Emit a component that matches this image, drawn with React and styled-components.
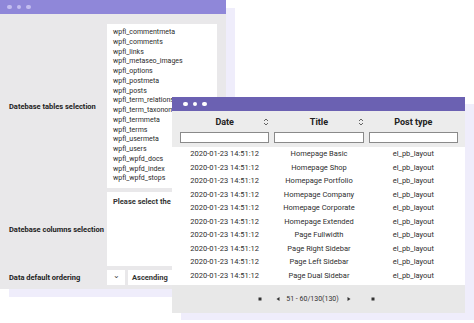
import styled, { createGlobalStyle } from 'styled-components';

const GlobalStyle = createGlobalStyle`
  html, body {
    margin: 0;
    padding: 0;
    background: #ffffff;
  }
  body {
    font-family: Roboto, "Liberation Sans", sans-serif;
    color: #222;
  }
`;

const tables = [
  'wpfl_commentmeta',
  'wpfl_comments',
  'wpfl_links',
  'wpfl_metaseo_images',
  'wpfl_options',
  'wpfl_postmeta',
  'wpfl_posts',
  'wpfl_term_relationships',
  'wpfl_term_taxonomy',
  'wpfl_termmeta',
  'wpfl_terms',
  'wpfl_usermeta',
  'wpfl_users',
  'wpfl_wpfd_docs',
  'wpfl_wpfd_index',
  'wpfl_wpfd_stops',
];

const rows = [
  'Homepage Basic',
  'Homepage Shop',
  'Homepage Portfolio',
  'Homepage Company',
  'Homepage Corporate',
  'Homepage Extended',
  'Page Fullwidth',
  'Page Right Sidebar',
  'Page Left Sidebar',
  'Page Dual Sidebar',
];

function SortIcon() {
  return (
    <svg width="6" height="8" viewBox="0 0 6 8">
      <path d="M1 3 L3 1 L5 3 M1 5 L3 7 L5 5" fill="none" stroke="#555" strokeWidth="0.9" />
    </svg>
  );
}

function PageIcon({ dir, end }) {
  const flip = dir === 'right' ? 'scale(-1,1) translate(-6,0)' : undefined;
  return (
    <svg width="6" height="6" viewBox="0 0 6 6">
      <g transform={flip}>
        {end ? (
          <rect x="1.5" y="1.5" width="3" height="3" fill="#333" />
        ) : (
          <path d="M1.5 3 L4.5 1 L4.5 5 Z" fill="#333" />
        )}
      </g>
    </svg>
  );
}

export default function App() {
  return (
    <>
      <GlobalStyle />
      <Stage>
        <BackWindow>
          <TitleBar $color="#8f87d9">
            <Dot $color="#c3bdf0" />
            <Dot $color="#c3bdf0" />
            <Dot $color="#c3bdf0" />
          </TitleBar>
          <SettingsGrid>
            <Label>Datebase tables selection</Label>
            <ListBox>
              {tables.map((t) => (
                <li key={t}>{t}</li>
              ))}
            </ListBox>
            <Label>Datebase columns selection</Label>
            <ColumnsBox>Please select the table first</ColumnsBox>
            <Label>Data default ordering</Label>
            <OrderRow>
              <SelectBox>⌄</SelectBox>
              <OrderBox>Ascending</OrderBox>
            </OrderRow>
          </SettingsGrid>
        </BackWindow>

        <FrontWindow>
          <TitleBar $color="#6b61b2" $dotsLeft="11px">
            <Dot $color="#ffffff" />
            <Dot $color="#ffffff" />
            <Dot $color="#ffffff" />
          </TitleBar>
          <TableHead>
            <HeadCell>
              Date
              <SortSlot>
                <SortIcon />
              </SortSlot>
            </HeadCell>
            <HeadCell>
              Title
              <SortSlot>
                <SortIcon />
              </SortSlot>
            </HeadCell>
            <HeadCell>Post type</HeadCell>
            <FilterInput />
            <FilterInput />
            <FilterInput />
          </TableHead>
          <TableBody>
            {rows.map((title) => (
              <Row key={title}>
                <Cell>2020-01-23 14:51:12</Cell>
                <Cell>{title}</Cell>
                <Cell>el_pb_layout</Cell>
              </Row>
            ))}
          </TableBody>
          <Footer>
            <PageBtn $gap="12px">
              <PageIcon end />
            </PageBtn>
            <PageBtn $gap="1px">
              <PageIcon />
            </PageBtn>
            <PageText>51 - 60/130(130)</PageText>
            <PageBtn $gap="18px">
              <PageIcon dir="right" />
            </PageBtn>
            <PageBtn>
              <PageIcon dir="right" end />
            </PageBtn>
          </Footer>
        </FrontWindow>
      </Stage>
    </>
  );
}

const Stage = styled.div`
  position: relative;
  width: 474px;
  height: 323px;
  overflow: hidden;
`;

const Window = styled.div`
  position: absolute;
  display: flex;
  flex-direction: column;
  box-shadow: 9px 8px 0 0 #efedfb;
`;

const BackWindow = styled(Window)`
  left: 0;
  top: 0;
  width: 226px;
  height: 289px;
  background: #e9e8ea;
  z-index: 1;
`;

const FrontWindow = styled(Window)`
  left: 172px;
  top: 97px;
  width: 293px;
  height: 216px;
  background: #ffffff;
  z-index: 2;
  box-shadow: 9px 7px 0 0 #efedfb;
`;

const TitleBar = styled.div`
  height: 14px;
  flex: none;
  background: ${(p) => p.$color};
  display: flex;
  align-items: center;
  gap: 5px;
  padding-left: ${(p) => p.$dotsLeft || '7px'};
`;

const Dot = styled.span`
  width: 4.5px;
  height: 4.5px;
  border-radius: 50%;
  background: ${(p) => p.$color};
`;

const SettingsGrid = styled.div`
  display: grid;
  grid-template-columns: 107px 110px;
  grid-template-rows: 164px 74px 15px;
  row-gap: 4px;
  padding-top: 10px;
`;

const Label = styled.div`
  display: flex;
  align-items: center;
  padding-left: 9px;
  font-size: 7.5px;
  font-weight: 700;
  color: #1c1c1c;
  white-space: nowrap;
`;

const ListBox = styled.ul`
  margin: 0;
  padding: 4px 0 0 6px;
  list-style: none;
  background: #ffffff;
  font-size: 7px;
  line-height: 9.75px;
  color: #2a2a2a;
  overflow: hidden;
  white-space: nowrap;
`;

const ColumnsBox = styled.div`
  background: #ffffff;
  padding: 5px 6px;
  font-size: 7.5px;
  font-weight: 700;
  color: #333;
  white-space: nowrap;
  overflow: hidden;
`;

const OrderRow = styled.div`
  display: flex;
  gap: 3px;
`;

const SelectBox = styled.div`
  width: 18px;
  background: #ffffff;
  display: flex;
  justify-content: center;
  align-items: center;
  font-size: 8px;
  line-height: 1;
  padding-bottom: 3px;
  box-sizing: border-box;
  color: #444;
`;

const OrderBox = styled.div`
  width: 60px;
  background: #ffffff;
  display: flex;
  align-items: center;
  padding-left: 4px;
  font-size: 7.5px;
  font-weight: 700;
  color: #333;
`;

const TableHead = styled.div`
  display: grid;
  grid-template-columns: repeat(3, 1fr);
  grid-template-rows: 21px 11px;
  column-gap: 5px;
  padding: 0 7px 4px 8px;
  background: #ececec;
`;

const HeadCell = styled.div`
  position: relative;
  display: flex;
  justify-content: center;
  align-items: center;
  font-size: 9px;
  font-weight: 700;
  color: #222;
`;

const SortSlot = styled.span`
  position: absolute;
  right: 0;
  top: 50%;
  transform: translateY(-50%);
  display: flex;
`;

const FilterInput = styled.div`
  background: #ffffff;
  border: 1px solid #8a8a8a;
`;

const TableBody = styled.div`
  flex: 1;
  padding-top: 0;
`;

const Row = styled.div`
  display: grid;
  grid-template-columns: repeat(3, 1fr);
  column-gap: 5px;
  padding: 0 7px 0 8px;
  height: 13.5px;
  align-items: center;
`;

const Cell = styled.div`
  text-align: center;
  font-size: 7.5px;
  color: #2e2e2e;
  white-space: nowrap;
`;

const Footer = styled.div`
  height: 28px;
  flex: none;
  background: #e8e8e8;
  display: flex;
  justify-content: center;
  align-items: center;
  padding-right: 4px;
`;

const PageBtn = styled.span`
  display: flex;
  margin-right: ${(p) => p.$gap || '0'};
`;

const PageText = styled.span`
  font-size: 7px;
  color: #333;
  margin: 0 7px 0 4px;
`;
